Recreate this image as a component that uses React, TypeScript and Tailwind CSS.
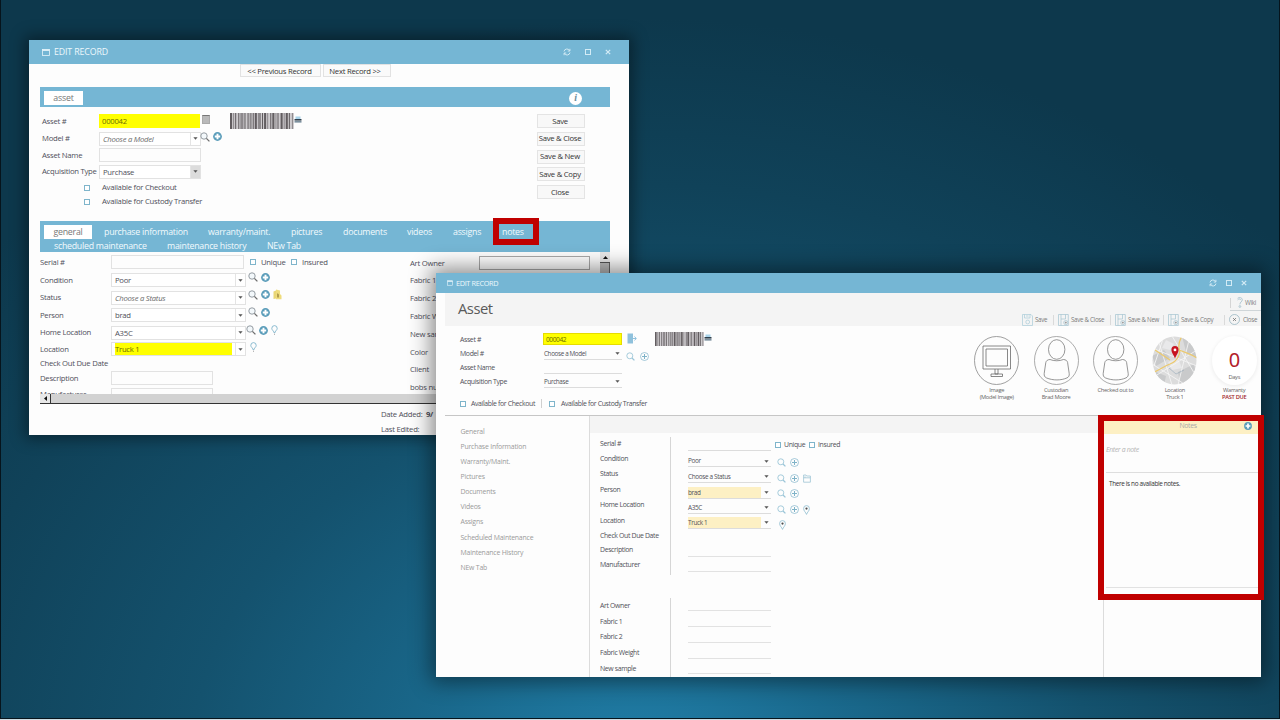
import type { ReactNode } from "react";

const BARS = [2, 1, 1, 1, 1, 2, 1, 1, 3, 1, 1, 2, 1, 1, 2, 1, 1, 1, 2, 1, 3, 1, 1, 1, 2, 1, 1, 2, 1, 1, 2, 1, 1, 1, 1, 2, 2, 1, 1, 1, 2, 1, 1, 2, 1, 1];

function Barcode({ className }: { className: string }) {
  let x = 0;
  const total = BARS.reduce((a, b) => a + b, 0);
  return (
    <svg className={className} viewBox={`0 0 ${total} 10`} preserveAspectRatio="none">
      <rect width={total} height="10" fill="#cfcccf" />
      {BARS.map((w, i) => {
        const at = x;
        x += w;
        return i % 2 === 0 ? <rect key={i} x={at} y="0" width={w} height="10" fill={i % 6 === 2 ? "#8d898c" : "#625d60"} /> : null;
      })}
    </svg>
  );
}

function Printer() {
  return (
    <svg className="h-[8px] w-[8px] shrink-0" viewBox="0 0 8 8">
      <rect x="1.5" y="0.5" width="5" height="2.5" fill="#a9d3ea" />
      <rect x="0.5" y="3" width="7" height="1.6" fill="#2f3f4c" />
      <rect x="0.5" y="5.2" width="7" height="1.3" fill="#5d7687" />
    </svg>
  );
}

function WindowGlyph({ className }: { className: string }) {
  return (
    <svg className={className} viewBox="0 0 8 7" fill="none" stroke="#e6f4fa">
      <rect x="0.5" y="0.5" width="7" height="6" strokeWidth="0.8" />
      <path d="M0.5 1.2H7.5" strokeWidth="1.4" />
    </svg>
  );
}

function Controls({ className }: { className: string }) {
  return (
    <div className={className}>
      <svg className="h-[8px] w-[8px]" viewBox="0 0 8 8" fill="none" stroke="#d3ebf5" strokeWidth="1">
        <path d="M1 3.4A3 3 0 0 1 6.6 2.6M7 4.6A3 3 0 0 1 1.4 5.4" />
        <path d="M6.9 0.8V3H4.8M1.1 7.2V5H3.2" />
      </svg>
      <svg className="h-[6px] w-[6px]" viewBox="0 0 6 6" fill="none" stroke="#d3ebf5">
        <rect x="0.5" y="0.5" width="5" height="5" />
      </svg>
      <svg className="h-[6px] w-[6px]" viewBox="0 0 6 6" fill="none" stroke="#d3ebf5" strokeWidth="1.2">
        <path d="M0.8 0.8L5.2 5.2M5.2 0.8L0.8 5.2" />
      </svg>
    </div>
  );
}

function Lens() {
  return (
    <svg className="h-[10px] w-[10px] shrink-0" viewBox="0 0 10 10" fill="none">
      <circle cx="4" cy="4" r="3.2" stroke="#8a9298" strokeWidth="0.9" fill="#f3f8fb" />
      <path d="M6.4 6.4L9.4 9.4" stroke="#6d6d6d" strokeWidth="1.3" />
    </svg>
  );
}

function AddDisc({ className }: { className: string }) {
  return (
    <svg className={className} viewBox="0 0 9 9">
      <circle cx="4.5" cy="4.5" r="4.4" fill="#5b9dba" />
      <path d="M4.5 1.8V7.2M1.8 4.5H7.2" stroke="#fff" strokeWidth="1.9" />
    </svg>
  );
}

function Bulb() {
  return (
    <svg className="h-[10px] w-[7px] shrink-0" viewBox="0 0 7 10" fill="none" stroke="#7db3cb" strokeWidth="0.9">
      <path d="M3.5 0.6A2.8 2.8 0 0 1 6.2 3.5C6.2 5 4.4 5.6 4.2 7.4H2.8C2.6 5.6 0.8 5 0.8 3.5A2.8 2.8 0 0 1 3.5 0.6Z" />
      <path d="M3 9.2H4" stroke="#8c8c8c" />
    </svg>
  );
}

function YellowFolder() {
  return (
    <svg className="h-[11px] w-[9px] shrink-0" viewBox="0 0 9 11">
      <path d="M0.5 2.5L3 1.5V9.5L0.5 10Z" fill="#e9d675" />
      <path d="M3 0.5L7 1.5V5L8.5 6.5V10.3H3Z" fill="#efdc7c" />
      <path d="M4.6 4L5.8 5.4V8.6H4.2V5.4Z" fill="#a48f42" />
    </svg>
  );
}

function ThinLens() {
  return (
    <svg className="h-[9px] w-[9px] shrink-0" viewBox="0 0 9 9" fill="none" stroke="#9cc6d8" strokeWidth="0.9">
      <circle cx="3.8" cy="3.8" r="3" />
      <path d="M6 6L8.4 8.4" strokeWidth="1.3" />
    </svg>
  );
}

function ThinPlus() {
  return (
    <svg className="h-[9px] w-[9px] shrink-0" viewBox="0 0 9 9" fill="none" stroke="#7fb3c8" strokeWidth="0.7">
      <circle cx="4.5" cy="4.5" r="4" />
      <path d="M4.5 2V7M2 4.5H7" strokeWidth="1" />
    </svg>
  );
}

function ThinPin() {
  return (
    <svg className="h-[10px] w-[7px] shrink-0" viewBox="0 0 7 10" fill="none" stroke="#8dbccf" strokeWidth="0.8">
      <path d="M3.5 9.4C2.8 7.4 0.6 5.8 0.6 3.5A2.9 2.9 0 0 1 6.4 3.5C6.4 5.8 4.2 7.4 3.5 9.4Z" />
      <circle cx="3.5" cy="3.6" r="1.1" fill="#4c4c4c" stroke="none" />
    </svg>
  );
}

function ThinFolder() {
  return (
    <svg className="h-[9px] w-[8px] shrink-0" viewBox="0 0 8 9" fill="none" stroke="#9dc4d4" strokeWidth="0.8">
      <path d="M0.6 8.2V1H3L3.6 2H7.4V8.2ZM0.6 3.8H7.4M2 3.8V2.4" />
    </svg>
  );
}

function Caret() {
  return (
    <svg className="h-[3px] w-[5px] shrink-0" viewBox="0 0 5 3">
      <path d="M0.4 0.3H4.6L2.5 2.8Z" fill="#555" />
    </svg>
  );
}

function Box({ className = "" }: { className?: string }) {
  return <span className={`h-[6px] w-[6px] shrink-0 border border-[#7fb5cb] bg-white ${className}`} />;
}

function Label({ children, className = "" }: { children: ReactNode; className?: string }) {
  return <span className={`shrink-0 pt-px whitespace-nowrap ${className}`}>{children}</span>;
}

function ClassicSelect({ value, className, italic, hot, grey }: { value: string; className: string; italic?: boolean; hot?: boolean; grey?: boolean }) {
  return (
    <div className={`flex shrink-0 border border-[#e2e2e2] bg-white ${className}`}>
      <div className={`min-w-0 flex-1 ${hot ? "pr-[3px] pl-[3px]" : ""}`}>
        <div className={`flex h-full items-center pt-[2px] ${hot ? "bg-[#ffff00] text-[#6b6b00]" : "pl-[3px]"} ${italic ? "text-[#6c6c6c] italic" : ""}`}>{value}</div>
      </div>
      <div className={`flex w-[10px] items-center justify-center border-l border-[#e4e4e4] ${grey ? "bg-[#dcdcdc]" : ""}`}>
        <Caret />
      </div>
    </div>
  );
}

function ClassicForm() {
  return (
    <div className="flex h-[142px] overflow-hidden">
      <div className="flex w-[370px] shrink-0 flex-col pt-[1px]">
        <div className="flex h-[18px] shrink-0 items-center">
          <Label className="w-[71px]">Serial #</Label>
          <div className="h-[14px] w-[133px] border border-[#e2e2e2]" />
          <Box className="ml-[6px]" />
          <Label className="ml-[5px] w-[24px]">Unique</Label>
          <Box className="ml-[6px]" />
          <Label className="ml-[5px]">Insured</Label>
        </div>
        <div className="flex h-[18px] shrink-0 items-center">
          <Label className="w-[71px]">Condition</Label>
          <ClassicSelect value="Poor" className="h-[14px] w-[135px]" />
          <div className="ml-[2px] flex items-center gap-[3px] pb-[6px]"><Lens /><AddDisc className="h-[9px] w-[9px]" /></div>
        </div>
        <div className="flex h-[17px] shrink-0 items-center">
          <Label className="w-[71px]">Status</Label>
          <ClassicSelect value="Choose a Status" italic className="h-[14px] w-[135px]" />
          <div className="ml-[2px] flex items-center gap-[3px] pb-[6px]"><Lens /><AddDisc className="h-[9px] w-[9px]" /><YellowFolder /></div>
        </div>
        <div className="flex h-[18px] shrink-0 items-center">
          <Label className="w-[71px]">Person</Label>
          <ClassicSelect value="brad" className="h-[14px] w-[135px]" />
          <div className="ml-[2px] flex items-center gap-[3px] pb-[6px]"><Lens /><AddDisc className="h-[9px] w-[9px]" /></div>
        </div>
        <div className="flex h-[17px] shrink-0 items-center">
          <Label className="w-[71px]">Home Location</Label>
          <ClassicSelect value="A35C" className="h-[14px] w-[135px]" />
          <div className="flex items-center gap-[3px] pb-[5px]"><Lens /><AddDisc className="h-[9px] w-[9px]" /><Bulb /></div>
        </div>
        <div className="flex h-[16px] shrink-0 items-center">
          <Label className="w-[71px]">Location</Label>
          <ClassicSelect value="Truck 1" hot className="h-[14px] w-[135px]" />
          <div className="ml-[4px] flex items-center pb-[5px]"><Bulb /></div>
        </div>
        <div className="flex h-[14px] shrink-0 items-center pb-px"><Label>Check Out Due Date</Label></div>
        <div className="flex h-[14px] shrink-0 items-center">
          <Label className="w-[71px]">Description</Label>
          <div className="h-[14px] w-[102px] border border-[#e2e2e2]" />
        </div>
        <div className="flex h-[18px] shrink-0 items-center">
          <Label className="w-[71px]">Manufacturer</Label>
          <div className="mt-[2px] h-[14px] w-[102px] border border-[#e2e2e2]" />
        </div>
      </div>
      <div className="flex w-[190px] shrink-0 flex-col pt-[2px]">
        {["Art Owner", "Fabric 1", "Fabric 2", "Fabric Weight", "New sample", "Color", "Client", "bobs number"].map((t) => (
          <div key={t} className="flex h-[17.8px] shrink-0 items-center">
            <Label className="w-[69px]">{t}</Label>
            <div className="h-[14px] w-[111px] border border-[#a9a9a9] bg-white" />
          </div>
        ))}
      </div>
      <div className="flex w-[10px] shrink-0 flex-col bg-[#e8e8e8]">
        <div className="flex h-[11px] items-center justify-center border-b border-[#555]">
          <svg className="h-[3px] w-[5px]" viewBox="0 0 5 3"><path d="M0 3H5L2.5 0Z" fill="#111" /></svg>
        </div>
        <div className="h-[40px] border-r border-[#666] bg-[#bdbdbd]" />
      </div>
    </div>
  );
}

function ClassicButton({ children }: { children: ReactNode }) {
  return <div className="flex h-[14px] w-[48px] items-center justify-center border border-[#e4e4e4] bg-[#f8f8f8] pt-px pr-[2px] whitespace-nowrap text-[#333]">{children}</div>;
}

function Tab({ children, className }: { children: ReactNode; className: string }) {
  return <span className={`shrink-0 whitespace-nowrap ${className}`}>{children}</span>;
}

function ClassicWindow() {
  return (
    <div className="absolute top-[40px] left-[29px] flex h-[395px] w-[600px] flex-col overflow-hidden bg-[#fdfdfd] text-[7.7px] leading-none tracking-[-0.25px] text-[#4f4f5a] shadow-[0_0_14px_4px_rgba(0,0,0,0.4)]">
      <div className="flex h-[24px] shrink-0 items-center bg-[#75b6d4] pr-[18px] pl-[13px]">
        <WindowGlyph className="h-[7px] w-[8px]" />
        <span className="ml-[4px] pt-px text-[8.8px] tracking-[-0.12px] text-[#eef8fc]">EDIT RECORD</span>
        <Controls className="ml-auto flex items-center gap-[14px]" />
      </div>
      <div className="flex h-[13px] shrink-0 gap-[2px] pl-[211px] text-[#333]">
        <div className="flex w-[81px] items-center justify-center border border-[#e2e2e2] bg-[#fafafa] pt-[2px] pr-[2px] whitespace-nowrap">&lt;&lt; Previous Record</div>
        <div className="flex w-[68px] items-center justify-center border border-[#e2e2e2] bg-[#fafafa] pt-[2px] pr-[4px] whitespace-nowrap">Next Record &gt;&gt;</div>
      </div>
      <div className="mt-[10px] mr-[19px] ml-[11px] flex h-[20px] shrink-0 items-center bg-[#75b6d4] pl-[4px]">
        <div className="mt-px flex h-[14px] w-[39px] items-center justify-center bg-white pt-[2px] text-[8.8px] tracking-[-0.15px] text-[#777]">asset</div>
        <div className="mt-[2px] mr-[28px] ml-auto flex h-[13px] w-[13px] items-center justify-center rounded-full bg-white font-['Liberation_Serif',serif] text-[10px] font-bold text-[#6a8d9d] italic">i</div>
      </div>
      <div className="flex h-[114px] shrink-0">
        <div className="flex w-[507px] flex-col pt-[5px] pl-[13px]">
          <div className="flex h-[18px] items-center">
            <Label className="w-[57px]">Asset #</Label>
            <div className="flex h-[14px] w-[101px] items-center bg-[#ffff00] pt-[2px] pl-[3px] text-[#6b6b00]">000042</div>
            <div className="mb-[3px] ml-[2px] h-[9px] w-[8px] border border-[#aaa] border-t-[#777] bg-[#b9b9b9]" />
            <Barcode className="ml-[20px] h-[16px] w-[64px]" />
            <div className="mb-[3px]"><Printer /></div>
          </div>
          <div className="flex h-[17px] items-center">
            <Label className="w-[57px] pt-[2px]">Model #</Label>
            <ClassicSelect value="Choose a Model" italic className="h-[14px] w-[102px]" />
            <div className="-ml-px flex items-center gap-[3px] pb-[4px]"><Lens /><AddDisc className="h-[9px] w-[9px]" /></div>
          </div>
          <div className="flex h-[16px] items-center">
            <Label className="w-[57px] pt-[2px]">Asset Name</Label>
            <div className="h-[14px] w-[102px] border border-[#e2e2e2]" />
          </div>
          <div className="flex h-[17px] items-center">
            <Label className="w-[57px] pt-[2px]">Acquisition Type</Label>
            <ClassicSelect value="Purchase" grey className="h-[14px] w-[102px]" />
          </div>
          <div className="flex h-[14px] items-center pl-[42px]"><Box className="mt-px" /><Label className="ml-[12px]">Available for Checkout</Label></div>
          <div className="flex h-[14px] items-center pl-[42px]"><Box className="mt-px" /><Label className="ml-[12px]">Available for Custody Transfer</Label></div>
        </div>
        <div className="flex flex-col gap-[3.8px] pt-[7px] pl-px">
          <ClassicButton>Save</ClassicButton>
          <ClassicButton>Save &amp; Close</ClassicButton>
          <ClassicButton>Save &amp; New</ClassicButton>
          <ClassicButton>Save &amp; Copy</ClassicButton>
          <ClassicButton>Close</ClassicButton>
        </div>
      </div>
      <div className="mr-[19px] ml-[11px] flex h-[31px] shrink-0 flex-col bg-[#75b6d4] text-[8.8px] tracking-[-0.25px] text-[#f2fafd]">
        <div className="flex h-[18px] items-center pt-[4px]">
          <Tab className="ml-[4px] flex h-[14px] w-[48px] items-center justify-center bg-white text-[#777]">general</Tab>
          <Tab className="ml-[12px] w-[104px]">purchase information</Tab>
          <Tab className="w-[83px]">warranty/maint.</Tab>
          <Tab className="w-[52px]">pictures</Tab>
          <Tab className="w-[64px]">documents</Tab>
          <Tab className="w-[46px]">videos</Tab>
          <Tab className="w-[49px]">assigns</Tab>
          <Tab className="">notes</Tab>
        </div>
        <div className="flex h-[13px] items-center pt-px pl-[14px]">
          <Tab className="w-[113px]">scheduled maintenance</Tab>
          <Tab className="w-[100px]">maintenance history</Tab>
          <Tab className="">NEw Tab</Tab>
        </div>
      </div>
      <div className="mr-[19px] ml-[11px] shrink-0">
        <ClassicForm />
        <div className="flex h-[10px] items-center border-b border-[#333] bg-[#d2d2d2]">
          <div className="flex h-full w-[11px] items-center justify-center border-r border-[#333] bg-[#e8e8e8]">
            <svg className="h-[5px] w-[3px]" viewBox="0 0 3 5"><path d="M3 0V5L0 2.5Z" fill="#111" /></svg>
          </div>
        </div>
      </div>
      <div className="flex flex-col pt-[3px] pl-[352px]">
        <div className="flex h-[15px] items-center"><Label>Date Added:&nbsp; <b>9/</b></Label></div>
        <div className="flex h-[15px] items-center"><Label>Last Edited:</Label></div>
      </div>
    </div>
  );
}

function DiskIcon() {
  return (
    <svg className="h-[12px] w-[11px] shrink-0" viewBox="0 0 11 12" fill="none" stroke="#a9cbd8" strokeWidth="0.7">
      <path d="M0.5 0.5H9L10.5 2V11.5H0.5Z" />
      <path d="M2.5 0.5V4H8V0.5M4 2H6.5" />
      <circle cx="5.7" cy="8" r="1.9" />
    </svg>
  );
}

function DiskActionIcon() {
  return (
    <svg className="h-[12px] w-[11px] shrink-0" viewBox="0 0 11 12" fill="none" stroke="#a3c3d0" strokeWidth="0.7">
      <path d="M0.5 0.5H10.3V11.5H0.5Z" />
      <path d="M3 0.5V5H7.5V0.5M3 5V11.5" />
      <circle cx="7.8" cy="8.6" r="2.1" />
      <path d="M6.8 8.6H8.8M7.8 7.6V9.6" stroke="#888" />
    </svg>
  );
}

function Bubble({ children, lines }: { children: ReactNode; lines: ReactNode }) {
  return (
    <div className="flex w-[59.4px] shrink-0 flex-col items-center text-[5.7px] leading-[7.4px] tracking-[-0.28px] text-[#666]">
      {children}
      <div className="mt-[2px] text-center whitespace-nowrap">{lines}</div>
    </div>
  );
}

function PersonIcon() {
  return (
    <svg className="h-[49px] w-[45px]" viewBox="0 0 45 49" fill="none" stroke="#6a6a6a" strokeWidth="0.7">
      <ellipse cx="22.5" cy="24.5" rx="22" ry="24" stroke="#888" />
      <ellipse cx="22.7" cy="13.5" rx="8.2" ry="9.8" />
      <path d="M16 23.5C13.5 23.7 12.3 24.6 11.8 26.5L10.2 37.5C10 39.7 10.6 41 12.4 41.9C19 44.6 27 44.6 33 41.9C34.8 41 35.5 39.7 35.2 37.5L33.6 26.5C33.1 24.6 31.9 23.7 29.4 23.5C25.5 25.2 20 25.2 16 23.5Z" />
    </svg>
  );
}

function MapIcon() {
  return (
    <svg className="h-[49px] w-[45px]" viewBox="0 0 45 49" fill="none">
      <clipPath id="disc"><ellipse cx="22.5" cy="24.5" rx="22" ry="24" /></clipPath>
      <g clipPath="url(#disc)">
        <rect width="45" height="49" fill="#dcdcdc" />
        <path d="M30 0L45 8V22L34 16ZM0 20L12 14L18 22L4 30ZM26 36L42 28L45 44L28 49ZM4 36L14 40L12 49H2Z" fill="#c9cacb" />
        <path d="M14 4L22 8L18 14L10 12ZM16 26L26 22L30 32L20 34Z" fill="#e9e9ea" />
        <g stroke="#f8f8f8" strokeWidth="0.8">
          <path d="M0 12L45 30M5 0L20 49M38 0L26 49M0 42L45 14M12 0L2 30M0 28L34 49M20 0L44 40" />
        </g>
        <g stroke="#ecc96c" strokeWidth="1.3">
          <path d="M0 37C8 34 12 30 18 28C26 25 29 17 27 12C26 7 28 4 30 0" />
          <path d="M27 14C34 17 39 18 45 22M3 14L18 24" />
        </g>
        <path d="M17 32L24 38L32 34" stroke="#8aa0b4" strokeWidth="0.5" />
      </g>
      <path d="M23 22.5C21.8 18.8 19.4 17 19.4 14A3.6 3.9 0 0 1 26.6 14C26.6 17 24.2 18.8 23 22.5Z" fill="#c81420" />
      <circle cx="23" cy="13.9" r="1.4" fill="#fff" />
    </svg>
  );
}

function ToolItem({ icon, text, className }: { icon: ReactNode; text: string; className: string }) {
  return (
    <div className={`flex shrink-0 items-center gap-[2px] whitespace-nowrap ${className}`}>
      {icon}
      <span className="pt-px">{text}</span>
    </div>
  );
}

function LineSelect({ value, className, hot }: { value: string; className: string; hot?: boolean }) {
  return (
    <div className={`flex shrink-0 items-center justify-between border-b border-[#dcdcdc] pr-[2px] ${className}`}>
      <span className={`flex items-center pt-px whitespace-nowrap ${hot ? "h-full w-[73px] bg-[#fdf0c4]" : ""}`}>{value}</span>
      <Caret />
    </div>
  );
}

function RecordHeader() {
  return (
    <div className="ml-[9px] flex h-[33px] shrink-0 bg-[#f4f4f4] text-[6.2px] tracking-[-0.3px] text-[#7c7c7c]">
      <div className="flex w-[577px] items-center pb-[2px] pl-[13px] text-[14.8px] tracking-[-0.5px] text-[#5a5a5a]">Asset</div>
      <div className="flex flex-1 flex-col">
        <div className="flex h-[18px] items-end justify-end">
          <div className="flex h-[16px] w-[31px] items-center border-b border-[#cfd5d8]">
            <div className="h-[10px] w-px bg-[#d5d5d5]" />
            <svg className="ml-[6px] h-[11px] w-[6px]" viewBox="0 0 6 11" fill="none" stroke="#a9c3ce" strokeWidth="0.9">
              <path d="M0.6 1.3C2 0 5.4 0.4 5.3 2.8C5.2 4.8 2.9 5 2.9 7.4M0.6 2.9C1.8 1.6 3.6 1.8 3.6 3" />
              <circle cx="2.9" cy="9.5" r="0.9" />
            </svg>
            <span className="ml-[2px] pt-px">Wiki</span>
          </div>
        </div>
        <div className="flex h-[15px] items-center pt-[2px]">
          <ToolItem icon={<DiskIcon />} text="Save" className="w-[31px]" />
          <ToolItem icon={<DiskActionIcon />} text="Save & Close" className="h-[10px] w-[57px] border-l border-[#dadada] pl-[4px]" />
          <ToolItem icon={<DiskActionIcon />} text="Save & New" className="h-[10px] w-[53px] border-l border-[#dadada] pl-[4px]" />
          <ToolItem icon={<DiskActionIcon />} text="Save & Copy" className="h-[10px] w-[61px] border-l border-[#dadada] pl-[4px]" />
          <div className="flex h-[10px] items-center border-l border-[#dadada] pl-[4px]">
            <svg className="h-[11px] w-[11px]" viewBox="0 0 11 11" fill="none" stroke="#8fb0bd" strokeWidth="0.7">
              <circle cx="5.5" cy="5.5" r="5" />
              <path d="M4 4L7 7M7 4L4 7" stroke="#666" />
            </svg>
            <span className="ml-[3px] pt-px">Close</span>
          </div>
        </div>
      </div>
    </div>
  );
}

function RecordSummary() {
  return (
    <div className="ml-[9px] flex h-[90px] shrink-0 border-b border-[#c6c6c6]">
      <div className="flex w-[517px] shrink-0 flex-col pt-[6px] pl-[15px] text-[6.9px] tracking-[-0.35px]">
        <div className="flex h-[15px] items-center">
          <Label className="w-[83px]">Asset #</Label>
          <div className="mb-px flex h-[12px] w-[79px] items-center border border-[#e6dc00] bg-[#ffff00] pt-[2px] pl-[2px] text-[6.6px] tracking-[-0.4px] text-[#6b6b00]">000042</div>
          <svg className="mb-[3px] ml-[5px] h-[11px] w-[10px]" viewBox="0 0 10 11">
            <path d="M0.5 0.5H6V10.5H0.5Z" fill="#8fc1dc" />
            <path d="M5.5 5.5H9M7.4 3.6L9.4 5.5L7.4 7.4" fill="none" stroke="#8fc1dc" />
          </svg>
          <Barcode className="mb-[2px] ml-[18px] h-[14px] w-[49px]" />
          <div className="mb-[4px]"><Printer /></div>
        </div>
        <div className="flex h-[14px] items-center">
          <Label className="w-[84px] pt-[2px]">Model #</Label>
          <LineSelect value="Choose a Model" className="h-[12px] w-[78px] text-[6.3px]" />
          <div className="mt-[4px] ml-[4px] flex gap-[5px]"><ThinLens /><ThinPlus /></div>
        </div>
        <div className="flex h-[14px] items-center">
          <Label className="w-[84px] pt-[2px]">Asset Name</Label>
          <div className="h-[12px] w-[78px] border-b border-[#dcdcdc]" />
        </div>
        <div className="flex h-[14px] items-center">
          <Label className="w-[84px] pt-[2px]">Acquisition Type</Label>
          <LineSelect value="Purchase" className="h-[12px] w-[78px] text-[6.3px]" />
        </div>
        <div className="mt-[7px] flex h-[15px] items-center">
          <Box />
          <Label className="ml-[5px] w-[65px]">Available for Checkout</Label>
          <div className="ml-[5px] h-[9px] w-px bg-[#d0d0d0]" />
          <Box className="ml-[7px]" />
          <Label className="ml-[6px]">Available for Custody Transfer</Label>
        </div>
      </div>
      <div className="flex pt-[10px] pl-[5px]">
        <Bubble lines={<>Image<br />(Model Image)</>}>
          <svg className="h-[49px] w-[45px]" viewBox="0 0 45 49" fill="none" stroke="#6a6a6a" strokeWidth="0.8">
            <ellipse cx="22.5" cy="24.5" rx="22" ry="24" stroke="#888" />
            <path d="M9 10H36.5V33H9ZM12 13H33.5V30H12ZM21 33V38H24V33M17 38H28.5V40.5H17Z" />
          </svg>
        </Bubble>
        <Bubble lines={<>Custodian<br />Brad Moore</>}><PersonIcon /></Bubble>
        <Bubble lines="Checked out to"><PersonIcon /></Bubble>
        <Bubble lines={<>Location<br />Truck 1</>}><MapIcon /></Bubble>
        <Bubble lines={<>Warranty<br /><span className="font-semibold text-[#a3262c]">PAST DUE</span></>}>
          <div className="flex h-[49px] w-[45px] flex-col items-center rounded-[50%] bg-white pt-[14px] shadow-[0_1px_4px_rgba(0,0,0,0.08)]">
            <span className="font-['Noto_Sans',sans-serif] text-[20px] leading-[20px] text-[#b3202a]">0</span>
            <span className="mt-[4px]">Days</span>
          </div>
        </Bubble>
      </div>
    </div>
  );
}

function RecordBody() {
  return (
    <div className="ml-[9px] flex min-h-0 flex-1 text-[6.9px] tracking-[-0.35px]">
      <div className="flex w-[144px] shrink-0 flex-col pt-[8.5px] pl-[15.5px] tracking-[-0.2px] text-[#9a9a9a]">
        {["General", "Purchase Information", "Warranty/Maint.", "Pictures", "Documents", "Videos", "Assigns", "Scheduled Maintenance", "Maintenance History", "NEw Tab"].map((t) => (
          <div key={t} className="flex h-[15.15px] items-center whitespace-nowrap">{t}</div>
        ))}
      </div>
      <div className="flex min-w-0 flex-1 flex-col border-l border-[#dcdcdc]">
        <div className="h-[17px] shrink-0 bg-[#f4f4f4]" />
        <div className="flex min-h-0 flex-1">
          <div className="flex w-[81px] shrink-0 flex-col pt-[4px]">
            <div className="flex h-[138px] shrink-0 flex-col border-r border-[#d6d6d6] pt-px pl-[10px] whitespace-nowrap">
              <div className="flex h-[13px] items-center">Serial #</div>
              <div className="flex h-[16px] items-center">Condition</div>
              <div className="flex h-[15.5px] items-center">Status</div>
              <div className="flex h-[15.5px] items-center">Person</div>
              <div className="flex h-[15.5px] items-center">Home Location</div>
              <div className="flex h-[15.5px] items-center">Location</div>
              <div className="flex h-[14.5px] items-center">Check Out Due Date</div>
              <div className="flex h-[14.5px] items-center">Description</div>
              <div className="flex h-[14.5px] items-center">Manufacturer</div>
            </div>
            <div className="mt-[23px] flex flex-1 flex-col border-r border-[#d6d6d6] pt-[0.5px] pl-[10px] whitespace-nowrap">
              {["Art Owner", "Fabric 1", "Fabric 2", "Fabric Weight", "New sample"].map((t) => (
                <div key={t} className="flex h-[15.7px] items-center">{t}</div>
              ))}
            </div>
          </div>
          <div className="ml-[17px] flex w-[83px] shrink-0 flex-col text-[6.4px]">
            <div className="h-[18px] shrink-0 border-b border-[#dcdcdc]" />
            <LineSelect value="Poor" className="mt-[5px] h-[11px]" />
            <LineSelect value="Choose a Status" className="mt-[4px] h-[12px]" />
            <LineSelect value="brad" hot className="mt-[4px] h-[12px]" />
            <LineSelect value="A35C" className="mt-[3px] h-[12px]" />
            <LineSelect value="Truck 1" hot className="mt-[3px] h-[12px]" />
            <div className="h-[28px] shrink-0 border-b border-[#e2e2e2]" />
            <div className="h-[15px] shrink-0 border-b border-[#e2e2e2]" />
            <div className="h-[39px] shrink-0 border-b border-[#e2e2e2]" />
            <div className="h-[16px] shrink-0 border-b border-[#e2e2e2]" />
            <div className="h-[15.5px] shrink-0 border-b border-[#e2e2e2]" />
            <div className="h-[16px] shrink-0 border-b border-[#e2e2e2]" />
            <div className="h-[15.5px] shrink-0 border-b border-[#e2e2e2]" />
          </div>
          <div className="ml-[4px] flex flex-col pt-[4px]">
            <div className="flex h-[15px] items-center">
              <Box />
              <Label className="ml-[3px] w-[21px]">Unique</Label>
              <Box className="ml-[4px]" />
              <Label className="ml-[3px]">Insured</Label>
            </div>
            <div className="mt-[2px] flex h-[16px] items-center gap-[4px] pl-[2px]"><ThinLens /><ThinPlus /></div>
            <div className="flex h-[16px] items-center gap-[4px] pl-[2px]"><ThinLens /><ThinPlus /><ThinFolder /></div>
            <div className="flex h-[15.5px] items-center gap-[4px] pl-[2px]"><ThinLens /><ThinPlus /></div>
            <div className="flex h-[16px] items-center gap-[4px] pl-[2px]"><ThinLens /><ThinPlus /><ThinPin /></div>
            <div className="flex h-[15.5px] items-center pl-[4px]"><ThinPin /></div>
          </div>
        </div>
      </div>
      <div className="flex w-[158px] shrink-0 flex-col border-l border-[#dcdcdc] pt-[4px]">
        <div className="flex h-[14px] items-center bg-[#fdf0c4] pr-[9px]">
          <span className="flex-1 pb-[2px] pl-[28px] text-center text-[#a8a8a8]">Notes</span>
          <AddDisc className="mb-[2px] h-[8px] w-[8px]" />
        </div>
        <div className="mx-[2px] flex h-[39px] items-start border-b border-[#dedede] pt-[13px] text-[#b5b5b5] italic">Enter a note</div>
        <div className="mx-[2px] flex h-[115px] items-start border-b border-[#e2e2e2] pt-[8px] pl-[3px] text-[6.4px] text-[#333]">There is no available notes.</div>
      </div>
    </div>
  );
}

function RecordWindow() {
  return (
    <div className="absolute top-[273px] left-[436px] flex h-[404px] w-[825px] flex-col bg-[#fdfdfd] leading-none text-[#505058] shadow-[0_0_20px_5px_rgba(0,0,0,0.45)]">
      <div className="flex h-[20px] shrink-0 items-center bg-[#75b6d4] pr-[14px] pl-[11px]">
        <WindowGlyph className="h-[6px] w-[6px]" />
        <span className="ml-[3px] pt-px text-[7.3px] tracking-[-0.35px] text-[#eef8fc]">EDIT RECORD</span>
        <Controls className="ml-auto flex items-center gap-[9px]" />
      </div>
      <RecordHeader />
      <RecordSummary />
      <RecordBody />
    </div>
  );
}

export default function App() {
  return (
    <div className="relative h-[720px] w-[1280px] overflow-hidden bg-[#0c3549] bg-[radial-gradient(ellipse_900px_760px_at_50%_108%,#2180aa_0%,#1a6a8e_22%,#14526e_50%,#104259_78%,#0d384c_100%)] font-['Open_Sans','Noto_Sans',sans-serif]">
      <ClassicWindow />
      <div className="absolute top-[218px] left-[493px] h-[27px] w-[46px] border-[6px] border-[#c00000]" />
      <RecordWindow />
      <div className="absolute top-[415px] left-[1098px] h-[185px] w-[166px] border-[6px] border-[#c00000]" />
      <div className="pointer-events-none absolute inset-0 border-x border-[#06141c]" />
      <div className="absolute top-[718px] left-0 h-[2px] w-full border-t border-[#06141c] bg-[#cfdde3]" />
    </div>
  );
}
